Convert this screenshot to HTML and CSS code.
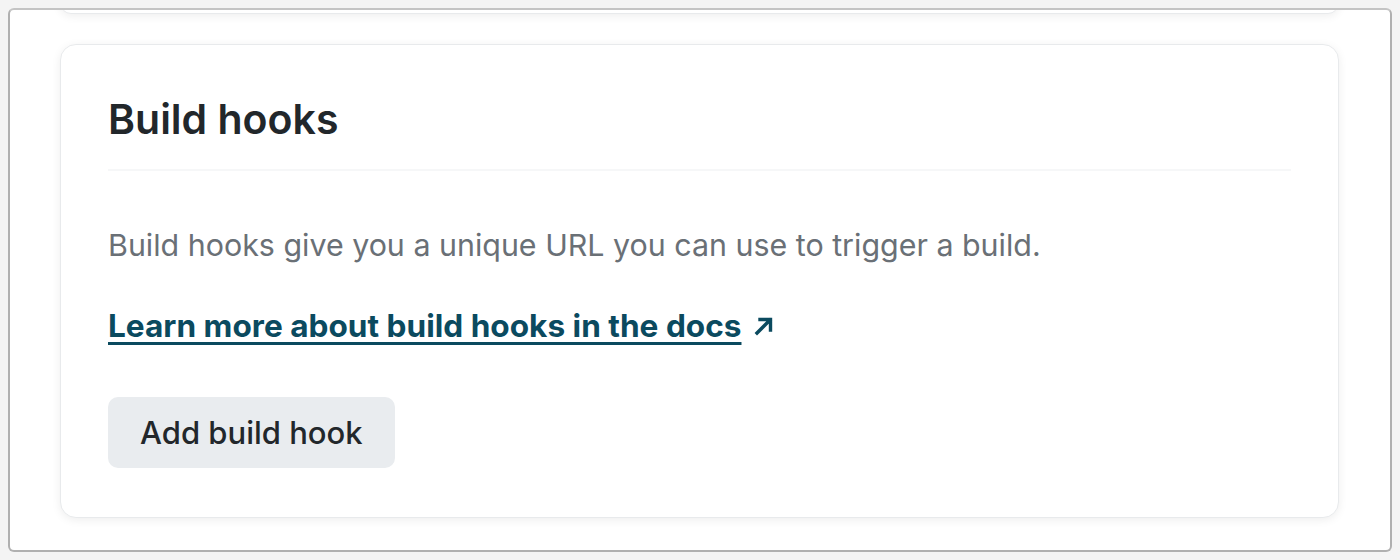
FILE: index.html
```html
<!DOCTYPE html>
<html lang="en">
<head>
  <meta charset="UTF-8">
  <title>Build hooks</title>
  <link rel="stylesheet" href="styles.css">
</head>
<body>
  <div class="window">
    <!-- bottom edge of the card above -->
    <div class="card card-prev"></div>

    <div class="card">
      <h2 class="card-title">Build hooks</h2>
      <p class="card-text">Build hooks give you a unique URL you can use to trigger a build.</p>
      <p class="card-link">
        <a href="#">Learn more about build hooks in the docs</a>
        <svg class="ext-icon" width="22" height="22" viewBox="0 0 22 22" aria-hidden="true">
          <path d="M4 18 L17 5 M7 4.5 H17.5 V15" fill="none" stroke="#0b4a5f" stroke-width="3.4" stroke-linecap="square"/>
        </svg>
      </p>
      <button class="btn">Add build hook</button>
    </div>
  </div>
</body>
</html>
```

FILE: styles.css
```css
body {
  margin: 0;
  background: #f4f4f4;
  font-family: Inter, "Noto Sans", sans-serif;
}

.window {
  margin: 8px;
  height: 544px;
  box-sizing: border-box;
  border: 2px solid #b0b0b0;
  border-top-color: #c4c4c4;
  border-radius: 6px;
  background: #fff;
  overflow: hidden;
  padding: 0 51px 0 50px;
  display: flex;
  flex-direction: column;
}

.card {
  background: #fff;
  border: 1px solid #e8eaec;
  border-radius: 16px;
  box-shadow: 0 2px 10px rgba(0, 0, 0, 0.07);
  padding: 50px 47px 49px 47px;
  display: flex;
  flex-direction: column;
}

.card-prev {
  flex: none;
  height: 20px;
  margin-top: -18px;
  padding: 0;
}

.card + .card {
  margin-top: 30px;
}

.card-title {
  margin: 0;
  font-size: 41px;
  line-height: 48px;
  font-weight: 600;
  color: #22272b;
  padding-bottom: 26px;
  border-bottom: 2px solid #f6f7f8;
}

.card-text {
  margin: 54px 0 0;
  font-size: 30.4px;
  line-height: 40px;
  color: #6a7076;
}

.card-link {
  margin: 41px 0 0;
  font-size: 31.6px;
  line-height: 40px;
  display: flex;
  align-items: center;
  gap: 12px;
}

.card-link a {
  color: #0b4a5f;
  font-weight: 700;
  text-decoration: underline;
  text-decoration-thickness: 3px;
  text-underline-offset: 5px;
}

.btn {
  margin-top: 51px;
  align-self: flex-start;
  font-family: inherit;
  font-size: 31px;
  line-height: 39px;
  font-weight: 500;
  color: #22272b;
  background: #e9ecef;
  border: none;
  border-radius: 10px;
  padding: 16px 32px;
  cursor: pointer;
}
```
